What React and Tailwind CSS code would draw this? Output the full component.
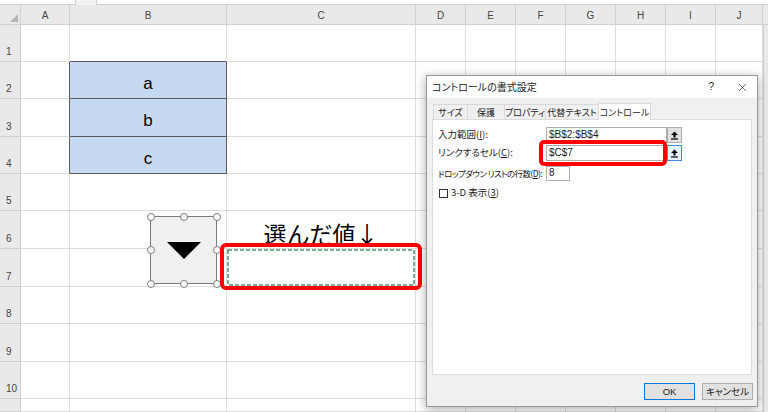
import { X } from 'lucide-react';

const GRID = 'grid grid-cols-[21px_49px_157px_189px_50px_50px_50px_50px_50px_50px_47px_5px]';
const COLS = ['A', 'B', 'C', 'D', 'E', 'F', 'G', 'H', 'I', 'J'];
const ROWS = [
  { n: 1, h: 'h-[37px]' },
  { n: 2, h: 'h-[37px]' },
  { n: 3, h: 'h-[38px]' },
  { n: 4, h: 'h-[37px]' },
  { n: 5, h: 'h-[37px]' },
  { n: 6, h: 'h-[38px]' },
  { n: 7, h: 'h-[38px]' },
  { n: 8, h: 'h-[37px]' },
  { n: 9, h: 'h-[38px]' },
  { n: 10, h: 'h-[37px]' },
  { n: '', h: 'h-[13px]' },
];
const VALUES = { 2: 'a', 3: 'b', 4: 'c' };

const ui = "font-['Noto_Sans_CJK_JP',sans-serif] [font-feature-settings:'palt']";

function Cell({ col, row }) {
  const inList = row >= 2 && row <= 4;
  const blue = col === 'B' && inList;
  const darkRight = blue || (col === 'A' && inList);
  const darkBottom = blue || (col === 'B' && row === 1);
  return (
    <div
      className={`border-r border-b ${darkRight ? 'border-r-[#5a5a5a]' : 'border-r-[#dcdcdc]'} ${
        darkBottom ? 'border-b-[#5a5a5a]' : 'border-b-[#dcdcdc]'
      } ${blue ? 'bg-[#c5d9f1]' : 'bg-white'} flex justify-center`}
    >
      {blue && (
        <span className="self-center pt-[6px] text-[17px] leading-none text-black font-['Liberation_Sans',sans-serif]">
          {VALUES[row]}
        </span>
      )}
      {col === 'C' && row === 6 && (
        <span className="self-end pb-[3px] text-[23px] leading-none text-black font-['Noto_Sans_CJK_JP',sans-serif]">
          選んだ値↓
        </span>
      )}
      {col === 'C' && row === 7 && (
        <svg className="w-full h-full" viewBox="0 0 188 37" preserveAspectRatio="none">
          <rect x="1" y="1" width="186" height="35" fill="none" stroke="#4b9368" strokeWidth="1.5" strokeDasharray="4 2" />
        </svg>
      )}
    </div>
  );
}

function UpButton({ active }) {
  return (
    <div
      className={`w-[15px] h-[16px] flex items-center justify-center border ${
        active ? 'border-[#3c8fdb] bg-[#e5f1fb]' : 'border-[#adadad] bg-[#e1e1e1]'
      }`}
    >
      <svg width="9" height="9" viewBox="0 0 9 9">
        <path d="M4.5 0.5 L8 4 L5.6 4 L5.6 6.5 L3.4 6.5 L3.4 4 L1 4 Z" fill="#000" />
        <rect x="1" y="7.4" width="7" height="1.2" fill="#000" />
      </svg>
    </div>
  );
}

function Handle({ className }) {
  return (
    <div className={`absolute w-[8px] h-[8px] rounded-full bg-white border border-[#7a7a7a] ${className}`} />
  );
}

function Dialog() {
  const tabs = [
    { t: 'サイズ', w: 'w-[35px]' },
    { t: '保護', w: 'w-[38px]' },
    { t: 'プロパティ', w: 'w-[42px]' },
    { t: '代替テキスト', w: 'w-[54px]' },
  ];
  return (
    <div className={`absolute left-[426px] top-[75px] w-[332px] h-[332px] bg-[#f0f0f0] border border-[#9a9a9a] shadow-[0_2px_10px_rgba(0,0,0,0.35)] flex flex-col text-[#1a1a1a] ${ui}`}>
      <div className="h-[22px] bg-white flex items-center pl-[5px] pr-[8px] text-[10px]">
        <span className="flex-1 leading-none">コントロールの書式設定</span>
        <span className="leading-none mr-[22px] font-['Liberation_Sans',sans-serif]">?</span>
        <X size={13} strokeWidth={1.2} color="#222" />
      </div>
      <div className="flex items-end ml-[6px] mt-[4px] h-[17px] text-[9px] whitespace-nowrap">
        {tabs.map((tab) => (
          <div
            key={tab.t}
            className={`${tab.w} h-[15px] border border-b-0 border-[#d9d9d9] -mr-px flex items-center justify-center leading-none`}
          >
            {tab.t}
          </div>
        ))}
        <div className="w-[53px] h-[17px] bg-white border border-b-0 border-[#d9d9d9] flex items-center justify-center leading-none relative z-10 -mb-px">
          コントロール
        </div>
      </div>
      <div className="mx-[5px] h-[256px] bg-white border border-[#dcdcdc] pl-[5px] pt-[7px] text-[9.5px] leading-none whitespace-nowrap">
        <div className="flex items-center h-[16px]">
          <span className="w-[108px]">
            入力範囲(<span className="underline">I</span>):
          </span>
          <div className="w-[121px] h-[16px] border border-[#adadad] flex items-center pl-[2px] font-['Liberation_Sans',sans-serif] text-[10px]">
            $B$2:$B$4
          </div>
          <UpButton />
        </div>
        <div className="flex items-center h-[16px] mt-[2px]">
          <span className="w-[108px]">
            リンクするセル(<span className="underline">C</span>):
          </span>
          <div className="w-[121px] h-[16px] border border-[#adadad] flex items-center pl-[2px] font-['Liberation_Sans',sans-serif] text-[10px]">
            $C$7
          </div>
          <UpButton active />
        </div>
        <div className="flex items-center h-[16px] mt-[4px]">
          <span className="w-[108px] text-[8.5px] tracking-[-0.6px]">
            ドロップダウン リストの行数(<span className="underline">D</span>):
          </span>
          <div className="w-[24px] h-[15px] border border-[#adadad] flex items-center pl-[2px] font-['Liberation_Sans',sans-serif] text-[10px]">
            8
          </div>
        </div>
        <div className="flex items-center h-[12px] mt-[6px] pl-[1px] gap-[3px]">
          <div className="w-[9px] h-[9px] border border-[#333] bg-white" />
          <span>
            3-D 表示(<span className="underline">3</span>)
          </span>
        </div>
      </div>
      <div className="flex justify-end gap-[7px] mt-[8px] pr-[4px] text-[9.5px] whitespace-nowrap">
        <div className="w-[51px] h-[17px] bg-[#e1e1e1] border border-[#0078d7] flex items-center justify-center leading-none font-['Liberation_Sans',sans-serif]">
          OK
        </div>
        <div className="w-[51px] h-[17px] bg-[#e1e1e1] border border-[#adadad] flex items-center justify-center leading-none">
          キャンセル
        </div>
      </div>
    </div>
  );
}

export default function App() {
  return (
    <div className="relative w-[768px] h-[412px] overflow-hidden bg-white font-['Liberation_Sans',sans-serif]">
      {/* top strip */}
      <div className="h-[5px] bg-white border-b border-[#d0d0d0] flex">
        <div className="ml-[75px] w-[22px] h-[5px] border-x border-[#d0d0d0] bg-[#f3f3f3]" />
      </div>

      {/* column header */}
      <div className={`${GRID} h-[20px] bg-[#e9e9e9] text-[10px] text-[#444]`}>
        <div className="border-r border-b border-[#cfcfcf] flex items-end justify-end pr-[2px] pb-[2px]">
          <svg width="8" height="8" viewBox="0 0 8 8">
            <path d="M8 0 L8 8 L0 8 Z" fill="#b5b5b5" />
          </svg>
        </div>
        {COLS.map((c) => (
          <div key={c} className="border-r border-b border-[#cfcfcf] flex items-center justify-center pt-[2px]">
            {c}
          </div>
        ))}
        <div className="bg-[#e9e9e9] border-b border-[#cfcfcf]" />
      </div>

      {/* rows */}
      {ROWS.map((r) => (
        <div key={r.n === '' ? 'x' : r.n} className={`${GRID} ${r.h}`}>
          <div className="bg-[#e9e9e9] border-r border-b border-[#cfcfcf] flex items-end pl-[6px] pb-[4px] text-[10px] text-[#444] leading-none">
            {r.n}
          </div>
          {COLS.map((c) => (
            <Cell key={c} col={c} row={r.n} />
          ))}
          <div className="bg-[#e9e9e9] border-l border-[#cfcfcf]" />
        </div>
      ))}

      {/* form control: dropdown */}
      <div className="absolute left-[150px] top-[216px] w-[67px] h-[68px] bg-[#f0f0f0] border border-[#7a7a7a] flex items-center justify-center">
        <svg width="34" height="17" viewBox="0 0 34 17">
          <path d="M0 0 L34 0 L17 17 Z" fill="#000" />
        </svg>
        <Handle className="-left-[4.5px] -top-[4.5px]" />
        <Handle className="left-[29px] -top-[4.5px]" />
        <Handle className="-right-[4.5px] -top-[4.5px]" />
        <Handle className="-left-[4.5px] top-[29px]" />
        <Handle className="-right-[4.5px] top-[29px]" />
        <Handle className="-left-[4.5px] -bottom-[4.5px]" />
        <Handle className="left-[29px] -bottom-[4.5px]" />
        <Handle className="-right-[4.5px] -bottom-[4.5px]" />
      </div>

      {/* highlight on C7 */}
      <div className="absolute left-[220px] top-[243px] w-[202px] h-[47px] border-4 border-[#ff0000] rounded-[6px]" />

      <Dialog />

      {/* highlight on link cell field */}
      <div className="absolute left-[539px] top-[140px] w-[128px] h-[26px] border-4 border-[#ff0000] rounded-[5px]" />
    </div>
  );
}
